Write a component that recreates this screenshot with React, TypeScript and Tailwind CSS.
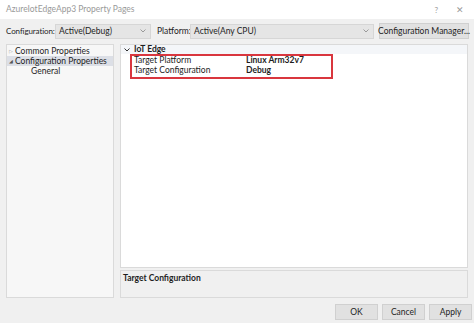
import React from "react";

const font = { fontFamily: '"Segoe UI", Lato, "Noto Sans", sans-serif' };

function Select({ value, className }: { value: string; className: string }) {
  return (
    <div className={`flex h-[15px] shrink-0 items-center justify-between border border-[#d6d6d6] bg-[#e5e5e5] pl-[3px] pr-[4px] ${className}`}>
      <span className="whitespace-nowrap text-[#1e1e1e]">{value}</span>
      <svg width="6" height="4" viewBox="0 0 6 4">
        <path d="M0.5 0.5 L3 3 L5.5 0.5" fill="none" stroke="#9a9a9a" strokeWidth="1" />
      </svg>
    </div>
  );
}

function Btn({ label, className }: { label: string; className: string }) {
  return (
    <div className={`flex h-[16px] shrink-0 items-center justify-center whitespace-nowrap border border-[#d0d0d0] bg-[#e1e1e1] text-[#1e1e1e] ${className}`}>
      {label}
    </div>
  );
}

export default function App() {
  return (
    <div className="flex h-[323px] w-[474px] flex-col overflow-hidden whitespace-nowrap bg-[#f0f0f0] text-[8.5px] leading-none text-[#1e1e1e]" style={font}>
      {/* title bar */}
      <div className="flex h-[19px] shrink-0 items-center bg-white pl-[6px] pr-[10px] text-[#9a9a9a]">
        <span className="text-[8.5px]">AzureIotEdgeApp3 Property Pages</span>
        <span className="ml-auto text-[8px]">?</span>
        <span className="ml-[18px] text-[9px]">✕</span>
      </div>

      {/* toolbar */}
      <div className="mt-[4px] flex h-[16px] shrink-0 items-center pl-[6px]">
        <span className="w-[49px] shrink-0 text-[8px] tracking-[-0.1px]">Configuration:</span>
        <Select value="Active(Debug)" className="w-[96px]" />
        <span className="ml-[6px] w-[33px] shrink-0">Platform:</span>
        <Select value="Active(Any CPU)" className="w-[184px]" />
        <Btn label="Configuration Manager..." className="ml-[5px] w-[90px]" />
      </div>

      {/* main */}
      <div className="mt-[5px] flex h-[254px] shrink-0 pl-[6px]">
        <div className="flex w-[108px] shrink-0 flex-col border border-[#dadada] bg-[#f7f7f7] pt-[1px]">
          <div className="flex h-[10px] items-center pl-[2px]">
            <span className="w-[6px] text-[5px] text-[#9a9a9a]">▷</span>
            <span>Common Properties</span>
          </div>
          <div className="flex h-[10px] items-center bg-[#dcdfe6] pl-[2px]">
            <span className="w-[6px] text-[5px] text-[#555]">◢</span>
            <span>Configuration Properties</span>
          </div>
          <div className="flex h-[10px] items-center pl-[24px]">General</div>
        </div>

        <div className="ml-[6px] flex w-[348px] shrink-0 flex-col">
          <div className="flex h-[225px] flex-col border border-[#dadada] bg-white">
            <div className="flex h-[9px] items-center bg-[#f4f6f9] pl-[3px]">
              <svg width="6" height="4" viewBox="0 0 6 4">
                <path d="M0.5 0.5 L3 3 L5.5 0.5" fill="none" stroke="#333" strokeWidth="1" />
              </svg>
              <span className="ml-[4px] font-bold">IoT Edge</span>
            </div>
            <div className="relative ml-[9px] flex flex-col pt-[1px]">
              <div className="flex h-[10px] items-center pl-[4px]">
                <span className="w-[112px]">Target Platform</span>
                <span className="font-bold">Linux Arm32v7</span>
              </div>
              <div className="flex h-[10px] items-center pl-[4px]">
                <span className="w-[112px]">Target Configuration</span>
                <span className="font-bold">Debug</span>
              </div>
              <div className="absolute left-0 top-0 h-[25px] w-[203px] border-2 border-[#d9363e]" />
            </div>
          </div>
          <div className="mt-[2px] flex h-[28px] flex-col border border-[#dadada] bg-[#f0f0f0] pl-[2px] pt-[3px]">
            <span className="font-bold">Target Configuration</span>
          </div>
        </div>
      </div>

      {/* buttons */}
      <div className="mt-[6px] flex pl-[335px]">
        <Btn label="OK" className="w-[43px]" />
        <Btn label="Cancel" className="ml-[4px] w-[43px]" />
        <Btn label="Apply" className="ml-[4px] w-[43px]" />
      </div>
    </div>
  );
}
